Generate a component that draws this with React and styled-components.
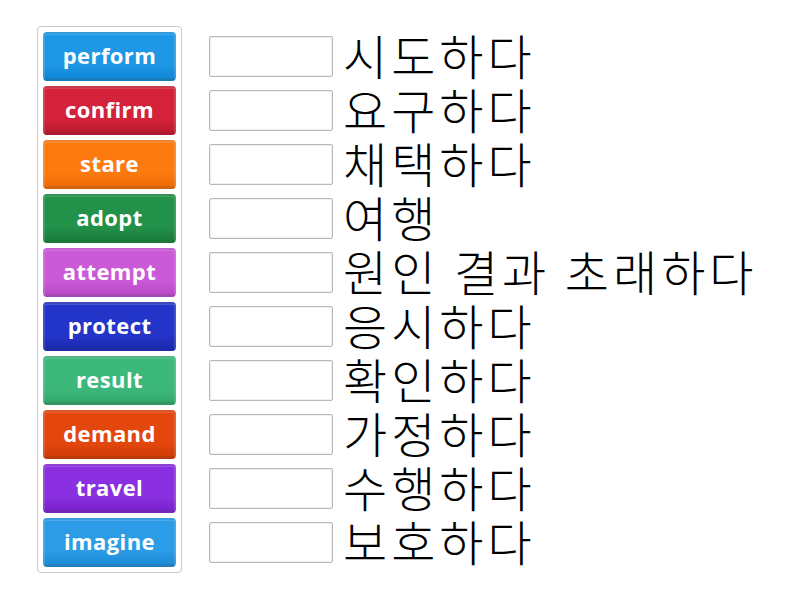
import React from "react";
import styled, { createGlobalStyle } from "styled-components";

const Global = createGlobalStyle`
  html, body { margin: 0; padding: 0; background: #fff; }
  body { font-family: "Open Sans", "Noto Sans", sans-serif; }
`;

const Page = styled.div`
  display: flex;
  align-items: flex-start;
  padding: 26px 0 0 37px;
`;

const Panel = styled.div`
  display: flex;
  flex-direction: column;
  gap: 5px;
  padding: 5px 5px 5px 5px;
  border: 1px solid #c9c9c9;
  border-radius: 4px;
  background: #fff;
`;

const Tile = styled.div`
  width: 133px;
  height: 49px;
  box-sizing: border-box;
  display: flex;
  align-items: center;
  justify-content: center;
  border-radius: 4px;
  color: #fff;
  font-family: "Open Sans", sans-serif;
  font-weight: 700;
  font-size: 22px;
  letter-spacing: 0.4px;
  background: linear-gradient(
    to bottom,
    ${(p) => p.$c} 0%,
    ${(p) => p.$c} 70%,
    ${(p) => p.$d} 100%
  );
  border: 2px solid rgba(255, 255, 255, 0.14);
  border-bottom: 3px solid rgba(0, 0, 0, 0.18);
  box-shadow: inset 0 1px 0 rgba(255, 255, 255, 0.15);
  padding-bottom: 3px;
`;

const Answers = styled.div`
  display: flex;
  flex-direction: column;
  gap: 5px;
  margin-left: 27px;
  padding-top: 6px;
`;

const Row = styled.div`
  display: flex;
  align-items: center;
  height: 49px;
  gap: 10px;
`;

const Slot = styled.div`
  width: 124px;
  height: 41px;
  box-sizing: border-box;
  border: 1px solid #b8b8b8;
  border-radius: 2px;
  background: #fff;
  box-shadow: inset 0 0 0 1px #f0f0f0;
`;

const Label = styled.div`
  font-family: "Noto Sans CJK KR", "Noto Sans", sans-serif;
  font-weight: 300;
  font-size: 48px;
  letter-spacing: 4px;
  line-height: 49px;
  color: #000;
  white-space: nowrap;
  margin-top: -4px;
`;

const tiles = [
  ["perform", "#1e98e6", "#1186d6"],
  ["confirm", "#d4223a", "#bb1a30"],
  ["stare", "#fd7a10", "#ee6c06"],
  ["adopt", "#229149", "#1b7d3d"],
  ["attempt", "#cb5ad8", "#b949c8"],
  ["protect", "#2435c9", "#1c29b0"],
  ["result", "#3db87b", "#33a86d"],
  ["demand", "#e4470d", "#d03c08"],
  ["travel", "#8b30e0", "#7a22cc"],
  ["imagine", "#2c9ce6", "#1b8ad8"],
];

const answers = [
  "시도하다",
  "요구하다",
  "채택하다",
  "여행",
  "원인 결과 초래하다",
  "응시하다",
  "확인하다",
  "가정하다",
  "수행하다",
  "보호하다",
];

export default function App() {
  return (
    <>
      <Global />
      <Page>
        <Panel>
          {tiles.map(([t, c, d]) => (
            <Tile key={t} $c={c} $d={d}>
              {t}
            </Tile>
          ))}
        </Panel>
        <Answers>
          {answers.map((a) => (
            <Row key={a}>
              <Slot />
              <Label>{a}</Label>
            </Row>
          ))}
        </Answers>
      </Page>
    </>
  );
}
